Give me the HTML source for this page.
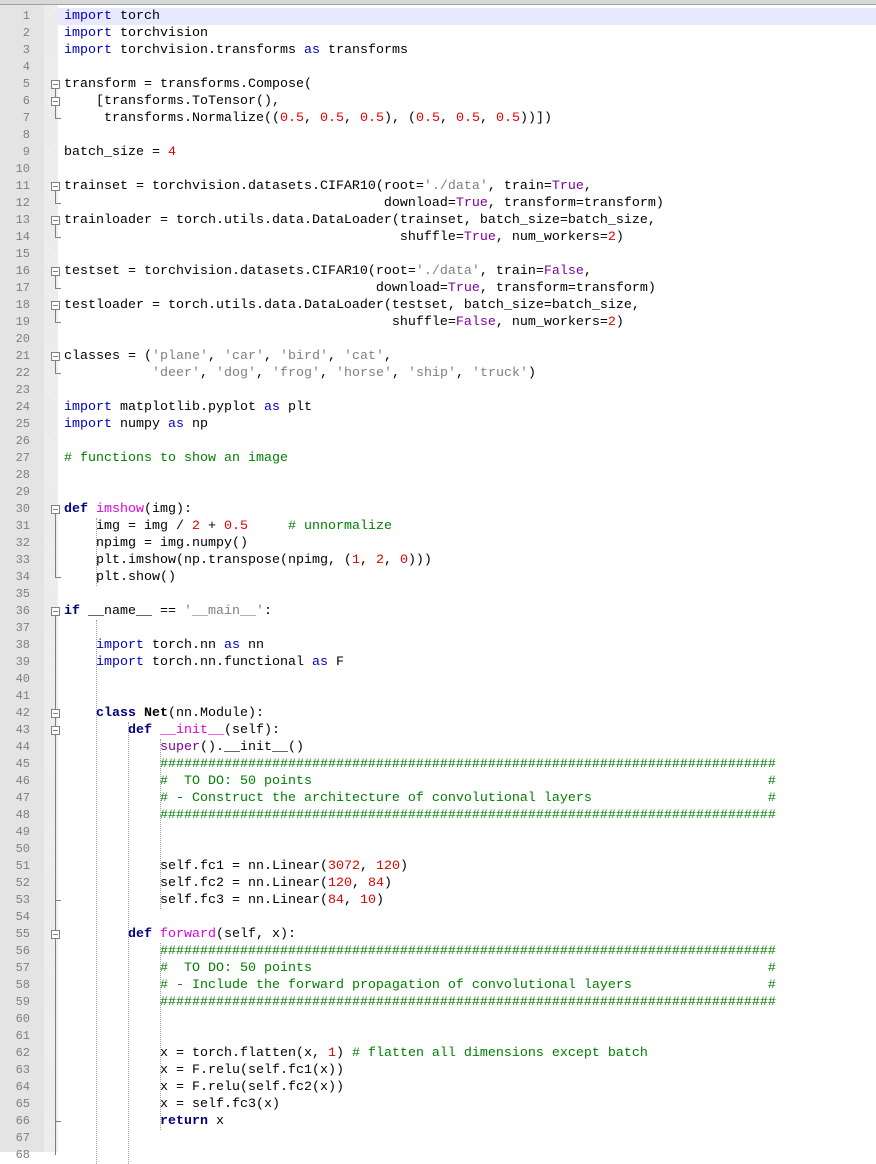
<!DOCTYPE html>
<html><head><meta charset="utf-8"><style>
html,body{margin:0;padding:0;background:#fff;width:876px;height:1152px;overflow:hidden}
#top{position:absolute;left:0;top:0;width:876px;height:4px;background:#d8d8d8;border-bottom:1px solid #a0a0a0}
#ln{position:absolute;left:0;top:5px;width:44px;height:1147px;background:#e4e4e4}
#fm{position:absolute;left:44px;top:5px;width:14px;height:1147px;background:repeating-linear-gradient(45deg,#f3f3f3 0 1px,#e6e6e6 1px 2px)}
.l{position:absolute;left:0;width:876px;height:17px;line-height:17px;font-family:"Liberation Mono",monospace;font-size:13.33px;white-space:pre;color:#000}
.l.hl{background:#e8e8ff;left:58px;width:818px}
.n{position:absolute;left:0;width:30px;text-align:right;color:#808080;font-size:12px}
.c{position:absolute;left:64px}
.hl .c{left:6px}
.k{color:#0000c0}
.b{color:#00007f;font-weight:bold}
.s{color:#808080}
.m{color:#e00000}
.g{color:#008000}
.p{color:#8000a0}
.f{color:#e000e0}
.fb{position:absolute;z-index:2;left:51px;width:9px;height:9px;border:1px solid #808080;background:#fff;box-sizing:border-box}
.fb:after{content:"";position:absolute;left:1px;top:3px;width:5px;height:1px;background:#808080}
.vl{position:absolute;left:55px;width:1px;background:#808080}
.end{position:absolute;left:55px;width:6px;height:1px;background:#808080}
.ig{position:absolute;width:0;border-left:1px dotted #a0a0a0}
</style></head><body>
<div id="top"></div><div id="ln"></div><div id="fm"></div>
<div class="l hl" style="top:8px"><span class="c"><span class="k">import</span> torch</span></div>
<script>
(function(){
var H='#############################################################################';
var L=[
null,
'<span class="k">import</span> torchvision',
'<span class="k">import</span> torchvision.transforms <span class="k">as</span> transforms',
'',
'transform = transforms.Compose(',
'    [transforms.ToTensor(),',
'     transforms.Normalize((<span class="m">0.5</span>, <span class="m">0.5</span>, <span class="m">0.5</span>), (<span class="m">0.5</span>, <span class="m">0.5</span>, <span class="m">0.5</span>))])',
'',
'batch_size = <span class="m">4</span>',
'',
'trainset = torchvision.datasets.CIFAR10(root=<span class="s">\'./data\'</span>, train=<span class="p">True</span>,',
'                                        download=<span class="p">True</span>, transform=transform)',
'trainloader = torch.utils.data.DataLoader(trainset, batch_size=batch_size,',
'                                          shuffle=<span class="p">True</span>, num_workers=<span class="m">2</span>)',
'',
'testset = torchvision.datasets.CIFAR10(root=<span class="s">\'./data\'</span>, train=<span class="p">False</span>,',
'                                       download=<span class="p">True</span>, transform=transform)',
'testloader = torch.utils.data.DataLoader(testset, batch_size=batch_size,',
'                                         shuffle=<span class="p">False</span>, num_workers=<span class="m">2</span>)',
'',
'classes = (<span class="s">\'plane\'</span>, <span class="s">\'car\'</span>, <span class="s">\'bird\'</span>, <span class="s">\'cat\'</span>,',
'           <span class="s">\'deer\'</span>, <span class="s">\'dog\'</span>, <span class="s">\'frog\'</span>, <span class="s">\'horse\'</span>, <span class="s">\'ship\'</span>, <span class="s">\'truck\'</span>)',
'',
'<span class="k">import</span> matplotlib.pyplot <span class="k">as</span> plt',
'<span class="k">import</span> numpy <span class="k">as</span> np',
'',
'<span class="g"># functions to show an image</span>',
'',
'',
'<span class="b">def</span> <span class="f">imshow</span>(img):',
'    img = img / <span class="m">2</span> + <span class="m">0.5</span>     <span class="g"># unnormalize</span>',
'    npimg = img.numpy()',
'    plt.imshow(np.transpose(npimg, (<span class="m">1</span>, <span class="m">2</span>, <span class="m">0</span>)))',
'    plt.show()',
'',
'<span class="b">if</span> __name__ == <span class="s">\'__main__\'</span>:',
'',
'    <span class="k">import</span> torch.nn <span class="k">as</span> nn',
'    <span class="k">import</span> torch.nn.functional <span class="k">as</span> F',
'',
'',
'    <span class="b">class</span> <b>Net</b>(nn.Module):',
'        <span class="b">def</span> <span class="f">__init__</span>(self):',
'            <span class="p">super</span>().__init__()',
'            <span class="g">'+H+'</span>',
'            <span class="g">#  TO DO: 50 points                                                         #</span>',
'            <span class="g"># - Construct the architecture of convolutional layers                      #</span>',
'            <span class="g">'+H+'</span>',
'',
'',
'            self.fc1 = nn.Linear(<span class="m">3072</span>, <span class="m">120</span>)',
'            self.fc2 = nn.Linear(<span class="m">120</span>, <span class="m">84</span>)',
'            self.fc3 = nn.Linear(<span class="m">84</span>, <span class="m">10</span>)',
'',
'        <span class="b">def</span> <span class="f">forward</span>(self, x):',
'            <span class="g">'+H+'</span>',
'            <span class="g">#  TO DO: 50 points                                                         #</span>',
'            <span class="g"># - Include the forward propagation of convolutional layers                 #</span>',
'            <span class="g">'+H+'</span>',
'',
'',
'            x = torch.flatten(x, <span class="m">1</span>) <span class="g"># flatten all dimensions except batch</span>',
'            x = F.relu(self.fc1(x))',
'            x = F.relu(self.fc2(x))',
'            x = self.fc3(x)',
'            <span class="b">return</span> x',
'',
''];
var h='';
function T(i){return 8+(i-1)*17;}
for(var i=1;i<=68;i++){
  var code=(i>1&&L[i-1]!==undefined)?'<span class="c">'+L[i-1]+'</span>':'';
  h+='<div class="l" style="top:'+T(i)+'px"><span class="n">'+i+'</span>'+code+'</div>';
}
[5,6,11,13,16,18,21,30,36,42,43,55].forEach(function(i){h+='<div class="fb" style="top:'+(T(i)+4)+'px"></div>';});
[[5,7],[6,7],[11,12],[13,14],[16,17],[18,19],[21,22],[30,34],[36,68],[42,68],[43,53],[55,66]].forEach(function(p){
  var a=p[0],b=p[1];
  h+='<div class="vl" style="top:'+(T(a)+13)+'px;height:'+(T(b)+8-T(a)-13)+'px"></div>';
  if(b<68)h+='<div class="end" style="top:'+(T(b)+8)+'px"></div>';
});
[[96,31,34],[96,37,68],[128,43,68],[160,44,53],[160,56,66]].forEach(function(p){
  h+='<div class="ig" style="left:'+p[0]+'px;top:'+T(p[1])+'px;height:'+(T(p[2]+1)-T(p[1]))+'px"></div>';
});
document.body.insertAdjacentHTML('beforeend',h);
})();
</script>
</body></html>
